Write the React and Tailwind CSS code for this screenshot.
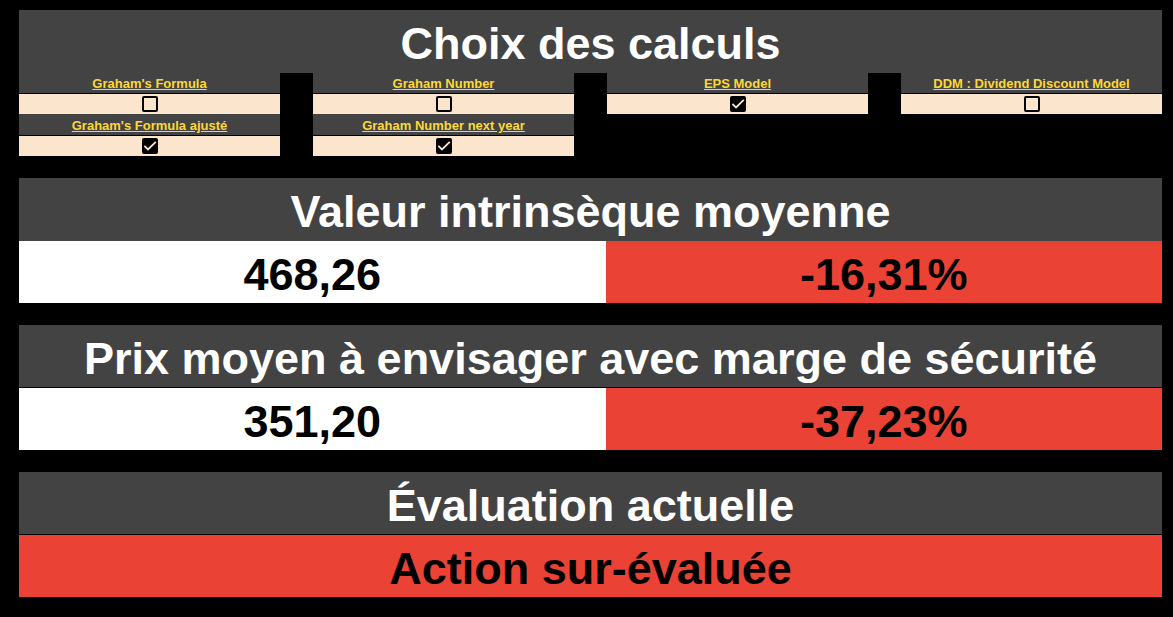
import { useState } from 'react'

const MODELS = [
  { id: 'graham-formula',      label: "Graham's Formula",              on: false },
  { id: 'graham-number',       label: 'Graham Number',                 on: false },
  { id: 'eps',                 label: 'EPS Model',                     on: true },
  { id: 'ddm',                 label: 'DDM : Dividend Discount Model', on: false },
  { id: 'graham-formula-adj',  label: "Graham's Formula ajusté",       on: true },
  { id: 'graham-number-next',  label: 'Graham Number next year',       on: true },
]

export default function App() {
  const [models, setModels] = useState(MODELS)

  const toggle = id => setModels(ms => ms.map(m => (m.id === id ? { ...m, on: !m.on } : m)))

  return (
    <main className="min-h-screen bg-black pt-[10px] pr-[11px] pb-5 pl-[19px] font-['Liberation_Sans',Arial,sans-serif] font-bold flex flex-col gap-[22px]">
      <section>
        <Title>Choix des calculs</Title>
        <div className="-mt-px grid grid-cols-4 gap-x-[33px]">
          {models.map(m => (
            <ModelCell key={m.id} model={m} onToggle={() => toggle(m.id)} />
          ))}
        </div>
      </section>

      <section>
        <Title>Valeur intrinsèque moyenne</Title>
        <Result value="468,26" diff="-16,31%" />
      </section>

      <section>
        <Title line>Prix moyen à envisager avec marge de sécurité</Title>
        <Result value="351,20" diff="-37,23%" />
      </section>

      <section>
        <Title line>Évaluation actuelle</Title>
        <p className="h-[62px] pt-0.5 bg-[#ea4335] text-black text-center text-[45px] leading-16">Action sur-évaluée</p>
      </section>
    </main>
  )
}

function Title({ line, children }) {
  return (
    <h2 className={`h-[63px] pt-0.5 bg-[#434343] text-white text-center text-[45px] leading-16 ${line ? 'border-b border-black' : ''}`}>
      {children}
    </h2>
  )
}

function Result({ value, diff }) {
  return (
    <div className="flex h-[62px] text-black text-center text-[45px] leading-16">
      <p className="w-[calc(50%+15px)] pt-0.5 bg-white">{value}</p>
      <p className="flex-1 pt-0.5 bg-[#ea4335]">{diff}</p>
    </div>
  )
}

function ModelCell({ model, onToggle }) {
  return (
    <div>
      <div className="h-[22px] pt-0.5 bg-[#434343] border-b border-black text-center text-[13px] leading-5">
        <a id={model.id} href={`#${model.id}`} className="text-[#fdd835] underline">{model.label}</a>
      </div>
      <div className="h-5 bg-[#fce5cd] flex items-center justify-center">
        <span className="relative size-4">
          <input
            type="checkbox"
            checked={model.on}
            onChange={onToggle}
            aria-labelledby={model.id}
            className="block size-4 appearance-none rounded-xs border-2 border-black checked:bg-black"
          />
          {model.on && (
            <svg viewBox="0 0 16 16" className="absolute inset-0 size-4 pointer-events-none" fill="none" stroke="#fce5cd" strokeWidth="1.8">
              <path d="M2.4 7.8 6 11.4 13.8 3.8" />
            </svg>
          )}
        </span>
      </div>
    </div>
  )
}
